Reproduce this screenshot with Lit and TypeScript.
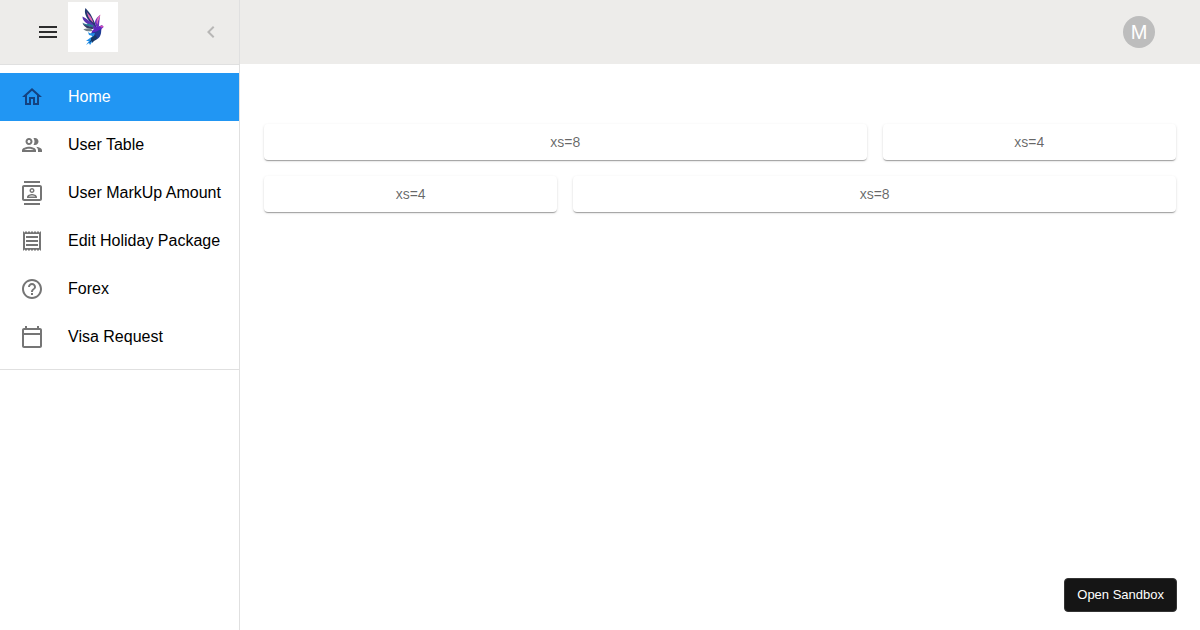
import { LitElement, html, css, svg } from "lit";
import { customElement, state } from "lit/decorators.js";
import { classMap } from "lit/directives/class-map.js";

const paths = {
  home: "m12 5.69 5 4.5V18h-2v-6H9v6H7v-7.81l5-4.5M12 3 2 12h3v8h6v-6h2v6h6v-8h3L12 3z",
  people:
    "M9 13.75c-2.34 0-7 1.17-7 3.5V19h14v-1.75c0-2.33-4.66-3.5-7-3.5zM4.34 17c.84-.58 2.87-1.25 4.66-1.25s3.82.67 4.66 1.25H4.34zM9 12c1.93 0 3.5-1.57 3.5-3.5S10.93 5 9 5 5.500 6.57 5.500 8.500 7.070 12 9 12zm0-5c.83 0 1.500.67 1.500 1.500S9.830 10 9 10s-1.500-.67-1.500-1.500S8.170 7 9 7zm7.040 6.810c1.160.840 1.960 1.960 1.960 3.440V19h4v-1.750c0-2.020-3.500-3.170-5.960-3.440zM15 12c1.930 0 3.500-1.570 3.500-3.500S16.930 5 15 5c-.540 0-1.040.130-1.500.350.630.890 1 1.980 1 3.150s-.370 2.260-1 3.150c.460.220.960.350 1.500.350z",
  contacts:
    "M20 4H4c-1.100 0-2 .9-2 2v12c0 1.100.9 2 2 2h16c1.100 0 2-.9 2-2V6c0-1.100-.9-2-2-2zm0 14H4V6h16v12zM4 0h16v2H4zm0 22h16v2H4zm8-10c1.380 0 2.500-1.120 2.500-2.500S13.380 7 12 7 9.500 8.120 9.500 9.500 10.620 12 12 12zm0-3.500c.55 0 1 .45 1 1s-.45 1-1 1-1-.45-1-1 .45-1 1-1zm5 7.490C17 13.900 13.690 13 12 13s-5 .9-5 2.990V17h10v-1.010zm-8.190-.49c.61-.52 2.030-1 3.190-1 1.170 0 2.590.48 3.200 1H8.810z",
  receipt:
    "M19.500 3.500 18 2l-1.500 1.500L15 2l-1.500 1.500L12 2l-1.500 1.500L9 2 7.500 3.500 6 2 4.500 3.500 3 2v20l1.500-1.500L6 22l1.500-1.500L9 22l1.500-1.500L12 22l1.500-1.500L15 22l1.500-1.500L18 22l1.500-1.500L21 22V2l-1.500 1.500zM19 19.090H5V4.910h14v14.180zM6 15h12v2H6zm0-4h12v2H6zm0-4h12v2H6z",
  help: "M11 18h2v-2h-2v2zm1-16C6.480 2 2 6.480 2 12s4.480 10 10 10 10-4.480 10-10S17.520 2 12 2zm0 18c-4.410 0-8-3.590-8-8s3.590-8 8-8 8 3.590 8 8-3.590 8-8 8zm0-14c-2.210 0-4 1.790-4 4h2c0-1.100.9-2 2-2s2 .9 2 2c0 2-3 1.750-3 5h2c0-2.250 3-2.500 3-5 0-2.210-1.790-4-4-4z",
  calendar:
    "M20 3h-1V1h-2v2H7V1H5v2H4c-1.100 0-2 .9-2 2v16c0 1.100.9 2 2 2h16c1.100 0 2-.9 2-2V5c0-1.100-.9-2-2-2zm0 18H4V10h16v11zm0-13H4V5h16v3z",
  menu: "M3 18h18v-2H3v2zm0-5h18v-2H3v2zm0-7v2h18V6H3z",
  chevron: "M15.410 7.410 14 6l-6 6 6 6 1.410-1.410L10.830 12z",
};

const icon = (name: keyof typeof paths) => html`
  <svg class="icon" viewBox="0 0 24 24" aria-hidden="true">${svg`<path d=${paths[name]} />`}</svg>
`;

const items: { label: string; icon: keyof typeof paths }[] = [
  { label: "Home", icon: "home" },
  { label: "User Table", icon: "people" },
  { label: "User MarkUp Amount", icon: "contacts" },
  { label: "Edit Holiday Package", icon: "receipt" },
  { label: "Forex", icon: "help" },
  { label: "Visa Request", icon: "calendar" },
];

const cells = [8, 4, 4, 8];

@customElement("app-root")
export class AppRoot extends LitElement {
  static styles = css`
    :host {
      display: flex;
      min-height: 100vh;
      background: #fff;
      color: rgba(0, 0, 0, 0.87);
      font-family: Helvetica, "Liberation Sans", Arial, sans-serif;
      font-size: 16px;
      line-height: 24px;
    }
    * {
      box-sizing: border-box;
    }
    button {
      font: inherit;
      border: 0;
      padding: 0;
      background: none;
      color: inherit;
      cursor: pointer;
    }
    .icon {
      display: block;
      width: 24px;
      height: 24px;
      fill: currentColor;
    }
    .drawer {
      flex: none;
      width: 240px;
      border-right: 1px solid #e0e0e0;
    }
    .brand {
      display: flex;
      align-items: center;
      height: 65px;
      padding: 0 16px 0 36px;
      background: #edecea;
      border-bottom: 1px solid #e0e0e0;
    }
    .menu {
      color: #2d2d2d;
    }
    .logo {
      display: block;
      width: 50px;
      height: 50px;
      margin: 0 auto 10px 8px;
      background: #fff;
    }
    .collapse {
      color: #b8b7b6;
    }
    .list {
      margin: 0;
      padding: 8px 0;
      list-style: none;
      border-bottom: 1px solid #e0e0e0;
    }
    .link {
      display: flex;
      align-items: center;
      gap: 24px;
      height: 48px;
      padding: 0 16px 0 20px;
      color: #000;
      text-decoration: none;
      white-space: nowrap;
    }
    .link .icon {
      flex: none;
      color: #757575;
    }
    .link.selected {
      background: #2196f3;
      color: #fff;
    }
    .link.selected .icon {
      color: #144280;
    }
    .page {
      flex: 1;
      min-width: 0;
    }
    .bar {
      display: flex;
      align-items: center;
      justify-content: flex-end;
      height: 64px;
      padding: 0 45px;
      background: #edecea;
    }
    .avatar {
      width: 32px;
      height: 32px;
      border-radius: 50%;
      background: #bdbdbd;
      color: #fff;
      font-size: 20px;
      line-height: 32px;
      text-align: center;
    }
    .grid {
      display: grid;
      grid-template-columns: repeat(12, 1fr);
      gap: 16px;
      padding: 60px 24px 24px;
    }
    .cell {
      grid-column: span 4;
      padding: 8px;
      border-radius: 4px;
      color: rgba(0, 0, 0, 0.6);
      font-size: 14px;
      line-height: 20px;
      text-align: center;
      box-shadow:
        0 2px 1px -1px rgba(0, 0, 0, 0.2),
        0 1px 1px 0 rgba(0, 0, 0, 0.14),
        0 1px 3px 0 rgba(0, 0, 0, 0.12);
    }
    .wide {
      grid-column: span 8;
    }
    .sandbox {
      position: fixed;
      right: 23px;
      bottom: 18px;
      height: 34px;
      padding: 0 12px;
      border: 1px solid #343434;
      border-radius: 4px;
      background: #151515;
      color: #fff;
      font-size: 13px;
      line-height: 16px;
    }
  `;

  @state() private selected = "Home";

  private select(event: Event, label: string) {
    event.preventDefault();
    this.selected = label;
  }

  render() {
    return html`
      <aside class="drawer">
        <div class="brand">
          <button class="menu" aria-label="Menu">${icon("menu")}</button>
          <svg class="logo" viewBox="0 0 50 50" role="img" aria-label="Logo">
            <path fill="#20376f" d="M17.500 6c-1.500 4 0 8 3 12l5 8 3-1-2-5-3-6c-1-3-4-5-6-8z" />
            <path fill="#e36bb5" d="M18.500 9c1 3 4 4 5.500 8l1.500 4-3-3c-2-2-3-5-4-9z" />
            <path fill="#5834b0" d="M14.500 14.500c0 4 3 6 6 8l6 5 2-2-5-5c-3-2-5-4-9-6z" />
            <path fill="#277e98" d="M14.500 20.500c2 4 6 4 10 5l1-2-5-2c-1 1-3 1-6-1z" />
            <path fill="#343b67" d="M14.500 21c2 5 6 6 11 6l-1-2c-4-1-7-1-10-4z" />
            <path fill="#73818a" d="M15.300 27.200c3 2.500 7 2.500 9 1.500l-1-2c-3 0-5-.5-8 .5z" />
            <path fill="#6930bd" d="M28 24c-2-4-1-7 4-11 0 4-1 7-1 11l-2 2z" />
            <path fill="#df70b7" d="M32.500 12.500c-3 2-4 5-4 8l1 2c0-4 2.500-6 3-10z" />
            <path fill="#5c27c0" d="M24 29c2-2 4-5 8-5l2-1 1.500 2-2 2c0 3-3 5-6 5l-4-1z" />
            <path fill="#d750b5" d="m32 24 2-.5 2 1.500-3 .5z" />
            <path fill="#203b94" d="M23 31c4-1 7-2 10-4 1 6-2 10-6 11l-3-4z" />
            <path fill="#218ee8" d="M20 30c2 2 4 1 7 1-1 2-1 4 0 6-3 1-3 4-5 6l-1-2-3 2 3-4-3 0 4-3 3-2-4-1z" />
            <path fill="#173765" d="m23 36 4-3 2 2c0 2-1 3-3 4l-2 2 0-2-3 2 2-3z" />
          </svg>
          <button class="collapse" aria-label="Collapse sidebar">${icon("chevron")}</button>
        </div>
        <nav aria-label="Main">
          <ul class="list">
            ${items.map(
              (item) => html`
                <li>
                  <a
                    href="#"
                    class=${classMap({ link: true, selected: item.label === this.selected })}
                    @click=${(e: Event) => this.select(e, item.label)}
                    >${icon(item.icon)}<span>${item.label}</span></a
                  >
                </li>
              `,
            )}
          </ul>
        </nav>
      </aside>
      <div class="page">
        <header class="bar"><button class="avatar" aria-label="Account">M</button></header>
        <main class="grid">
          ${cells.map((n) => html`<div class=${classMap({ cell: true, wide: n === 8 })}>xs=${n}</div>`)}
        </main>
      </div>
      <button class="sandbox">Open Sandbox</button>
    `;
  }
}
